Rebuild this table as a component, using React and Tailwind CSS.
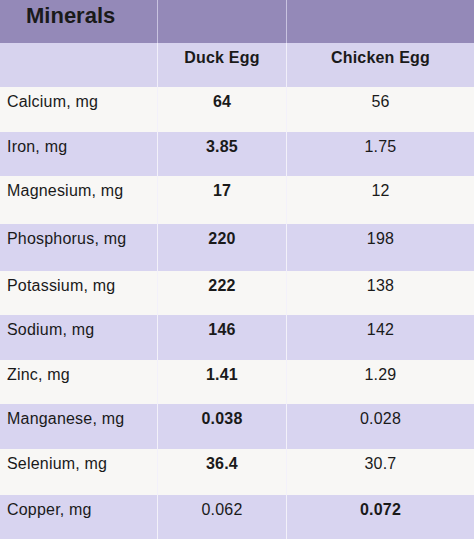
const rows = [
  { name: "Calcium, mg", duck: "64", chicken: "56", h: "h-[45px]" },
  { name: "Iron, mg", duck: "3.85", chicken: "1.75", h: "h-[44px]" },
  { name: "Magnesium, mg", duck: "17", chicken: "12", h: "h-[48px]" },
  { name: "Phosphorus, mg", duck: "220", chicken: "198", h: "h-[47px]" },
  { name: "Potassium, mg", duck: "222", chicken: "138", h: "h-[44px]" },
  { name: "Sodium, mg", duck: "146", chicken: "142", h: "h-[45px]" },
  { name: "Zinc, mg", duck: "1.41", chicken: "1.29", h: "h-[44px]" },
  { name: "Manganese, mg", duck: "0.038", chicken: "0.028", h: "h-[45px]" },
  { name: "Selenium, mg", duck: "36.4", chicken: "30.7", h: "h-[46px]" },
  { name: "Copper, mg", duck: "0.062", chicken: "0.072", h: "h-[44px]", chickenBold: true },
];

function App() {
  return (
    <div className="w-[474px] h-[539px] overflow-hidden text-[#1a1a1a] font-['Liberation_Sans',Arial,sans-serif]">
      <div className="flex h-[43px] bg-[#9489b8]">
        <div className="w-[157px] pl-[26px] pt-[3px] text-[22px] leading-[26px] font-bold">Minerals</div>
        <div className="w-[129px] border-l border-[#c9c3e0]"></div>
        <div className="flex-1 border-l border-[#c9c3e0]"></div>
      </div>
      <div className="flex h-[44px] bg-[#d7d3ee] text-[16px] leading-[19px] tracking-[0.2px] font-bold">
        <div className="w-[157px]"></div>
        <div className="w-[129px] border-l border-[#f1effa] pt-[5px] text-center">Duck Egg</div>
        <div className="flex-1 border-l border-[#f1effa] pt-[5px] text-center">Chicken Egg</div>
      </div>
      {rows.map((r, i) => (
        <div
          key={r.name}
          className={`flex ${r.h} text-[16px] leading-[19px] tracking-[0.2px] ${i % 2 === 0 ? "bg-[#f8f7f5]" : "bg-[#d8d4f0]"}`}
        >
          <div className="w-[157px] pl-[7px] pt-[5px]">{r.name}</div>
          <div className={`w-[129px] border-l border-[#f3f1fa] pt-[5px] text-center ${r.chickenBold ? "" : "font-bold"}`}>
            {r.duck}
          </div>
          <div className={`flex-1 border-l border-[#f3f1fa] pt-[5px] text-center ${r.chickenBold ? "font-bold" : ""}`}>
            {r.chicken}
          </div>
        </div>
      ))}
    </div>
  );
}

export default App;
